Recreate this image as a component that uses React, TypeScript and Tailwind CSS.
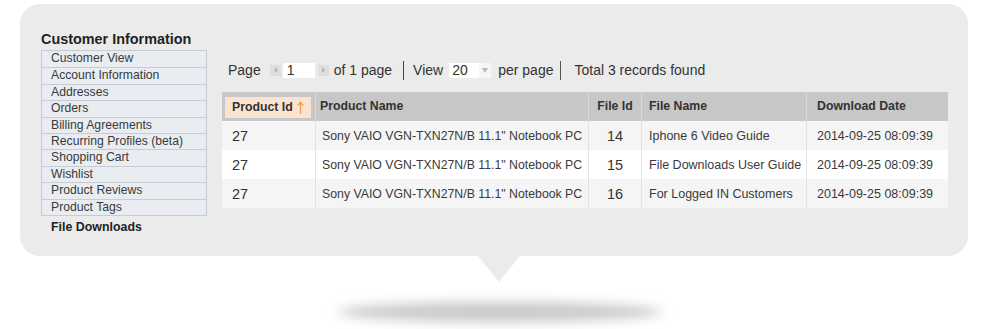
import React from "react";

const navItems = [
  "Customer View",
  "Account Information",
  "Addresses",
  "Orders",
  "Billing Agreements",
  "Recurring Profiles (beta)",
  "Shopping Cart",
  "Wishlist",
  "Product Reviews",
  "Product Tags",
];

const rows = [
  { pid: "27", name: 'Sony VAIO VGN-TXN27N/B 11.1" Notebook PC', fid: "14", fname: "Iphone 6 Video Guide", date: "2014-09-25 08:09:39" },
  { pid: "27", name: 'Sony VAIO VGN-TXN27N/B 11.1" Notebook PC', fid: "15", fname: "File Downloads User Guide", date: "2014-09-25 08:09:39" },
  { pid: "27", name: 'Sony VAIO VGN-TXN27N/B 11.1" Notebook PC', fid: "16", fname: "For Logged IN Customers", date: "2014-09-25 08:09:39" },
];

function UpArrow() {
  return (
    <svg width="7" height="14" viewBox="0 0 7 14" className="ml-[4px]">
      <path d="M3.5 1.5 V13" stroke="#f39a4a" strokeWidth="1.3" fill="none" />
      <path d="M0.8 4.5 L3.5 1.2 L6.2 4.5" stroke="#f39a4a" strokeWidth="1.2" fill="none" />
    </svg>
  );
}

export default function App() {
  return (
    <div className="w-[994px] h-[329px] bg-white overflow-hidden flex flex-col font-['Liberation_Sans',Arial,sans-serif] text-[#333]">
      {/* Panel */}
      <div className="mt-[4px] ml-[20px] w-[948px] h-[252px] rounded-[20px] bg-[#eaebea] flex items-start pt-[27px] pl-[21px] shrink-0">
        {/* Sidebar */}
        <div className="w-[166px] flex flex-col">
          <div className="text-[14.4px] leading-[17px] font-bold text-[#222] mb-[2px]">Customer Information</div>
          <div className="border border-[#c6ccd4] bg-[#e9edf1]">
            {navItems.map((t, i) => (
              <div
                key={t}
                className={
                  "h-[16.4px] leading-[15.4px] pl-[9px] text-[12.2px] text-[#3a3a3a] whitespace-nowrap " +
                  (i > 0 ? "border-t border-[#c6ccd4]" : "")
                }
              >
                {t}
              </div>
            ))}
          </div>
          <div className="mt-[3px] pl-[10px] text-[12.4px] leading-[16px] font-bold text-[#222]">File Downloads</div>
        </div>

        {/* Main */}
        <div className="ml-[15px] mt-[29px] w-[726px] flex flex-col">
          {/* Pager */}
          <div className="h-[20px] flex items-center text-[14px] text-[#333] whitespace-nowrap">
            <span className="ml-[6px]">Page</span>
            <span className="ml-[9px] w-[11px] h-[11px] bg-[#dddedd] flex items-center justify-center">
              <span className="w-0 h-0 border-y-[3px] border-y-transparent border-r-[3px] border-r-[#b3b3b3]" />
            </span>
            <span className="ml-[2px] w-[32px] h-[15px] bg-white leading-[15px] pl-[4px]">1</span>
            <span className="ml-[3px] w-[11px] h-[11px] bg-[#dddedd] flex items-center justify-center">
              <span className="w-0 h-0 border-y-[3px] border-y-transparent border-l-[3px] border-l-[#b3b3b3]" />
            </span>
            <span className="ml-[5px]">of 1 page</span>
            <span className="ml-[11px] w-px h-[19px] bg-[#444]" />
            <span className="ml-[9px]">View</span>
            <span className="ml-[6px] w-[42px] h-[15px] bg-white flex items-center">
              <span className="pl-[3px] leading-[15px] w-[30px]">20</span>
              <span className="w-[12px] h-[15px] bg-[#f6f6f6] flex items-center justify-center">
                <span className="w-0 h-0 border-x-[3px] border-x-transparent border-t-[5px] border-t-[#b8b8b8]" />
              </span>
            </span>
            <span className="ml-[7px]">per page</span>
            <span className="ml-[7px] w-px h-[19px] bg-[#555]" />
            <span className="ml-[13px]">Total 3 records found</span>
          </div>

          {/* Table */}
          <div className="mt-[12px] w-[726px] flex flex-col">
            <div className="h-[29px] flex bg-[#c6c7c6] text-[12.3px] font-bold text-[#333] whitespace-nowrap">
              <div className="w-[93px] h-[29px] pt-[5px] pb-[3px] pl-[3px] pr-[4px]">
                <div className="h-[21px] bg-[#fbe4cf] flex items-center pl-[7px]">
                  <span>Product Id</span>
                  <UpArrow />
                </div>
              </div>
              <div className="w-[273px] border-l border-[#d7d8d7] flex items-center pl-[4px]">Product Name</div>
              <div className="w-[53px] border-l border-[#d7d8d7] flex items-center justify-center">File Id</div>
              <div className="w-[165px] border-l border-[#d7d8d7] flex items-center pl-[7px]">File Name</div>
              <div className="w-[142px] border-l border-[#d7d8d7] flex items-center pl-[10px]">Download Date</div>
            </div>
            {rows.map((r, i) => (
              <div
                key={r.fid}
                className={"h-[29px] flex whitespace-nowrap " + (i % 2 === 0 ? "bg-[#f5f5f5]" : "bg-white")}
              >
                <div className="w-[93px] flex items-center pl-[10px] pt-[3px] text-[14.5px] text-[#333]">{r.pid}</div>
                <div className="w-[273px] border-l border-[#e2e2e2] flex items-center pl-[6px] pt-[2px] text-[12.3px] text-[#3a3a3a]">{r.name}</div>
                <div className="w-[53px] border-l border-[#e2e2e2] flex items-center justify-center pt-[3px] text-[14.5px] text-[#333]">{r.fid}</div>
                <div className="w-[165px] border-l border-[#e2e2e2] flex items-center pl-[7px] pt-[2px] text-[12.5px] text-[#3a3a3a]">{r.fname}</div>
                <div className="w-[142px] border-l border-[#e2e2e2] flex items-center pl-[10px] pt-[2px] text-[12.5px] text-[#3a3a3a]">{r.date}</div>
              </div>
            ))}
          </div>
        </div>
      </div>

      {/* Pointer triangle */}
      <div className="ml-[478px] w-0 h-0 border-x-[21.5px] border-x-transparent border-t-[26px] border-t-[#eaebea] shrink-0" />

      {/* Floor shadow */}
      <div className="mt-[20px] ml-[338px] w-[324px] h-[20px] rounded-[50%] bg-[#c9c9c9] blur-[6px] shrink-0" />
    </div>
  );
}
